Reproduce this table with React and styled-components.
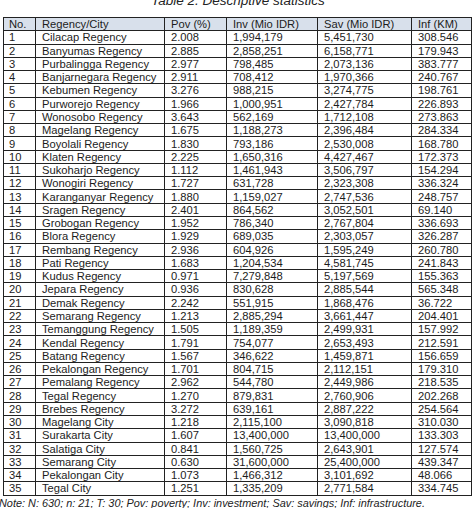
import React from "react";
import styled, { createGlobalStyle } from "styled-components";

const Global = createGlobalStyle`
  html, body { margin: 0; padding: 0; background: #ffffff; }
  body { font-family: "Liberation Sans", Arial, sans-serif; color: #1c1c1c; overflow: hidden; }
`;

const Page = styled.div`
  width: 474px;
  height: 508px;
  overflow: hidden;
  display: flex;
  flex-direction: column;
`;

const Title = styled.div`
  font-style: italic;
  font-size: 13.5px;
  line-height: 16px;
  height: 16px;
  margin-top: -7px;
  margin-bottom: 8px;
  text-align: center;
  padding-left: 2px;
  color: #222;
`;

const Table = styled.table`
  border-collapse: collapse;
  margin-left: 3px;
  width: 468px;
  table-layout: fixed;
  font-size: 11.2px;
`;

const Col = styled.col`
  width: ${(p) => p.$w}px;
`;

const Row = styled.tr`
  height: 13.28px;
  background: ${(p) => (p.$head ? "#d8e0eb" : "#ffffff")};
`;

const Cell = styled.td`
  border: 1px solid #222;
  padding: 0 0 0 ${(p) => p.$pad || 6}px;
  line-height: 12px;
  white-space: nowrap;
  overflow: hidden;
  vertical-align: middle;
`;

const Note = styled.div`
  font-style: italic;
  font-size: 10.9px;
  line-height: 12px;
  margin-top: 1px;
  margin-left: -1px;
  white-space: nowrap;
  color: #222;
`;

const data = [
  ["Cilacap Regency", "2.008", "1,994,179", "5,451,730", "308.546"],
  ["Banyumas Regency", "2.885", "2,858,251", "6,158,771", "179.943"],
  ["Purbalingga Regency", "2.977", "798,485", "2,073,136", "383.777"],
  ["Banjarnegara Regency", "2.911", "708,412", "1,970,366", "240.767"],
  ["Kebumen Regency", "3.276", "988,215", "3,274,775", "198.761"],
  ["Purworejo Regency", "1.966", "1,000,951", "2,427,784", "226.893"],
  ["Wonosobo Regency", "3.643", "562,169", "1,712,108", "273.863"],
  ["Magelang Regency", "1.675", "1,188,273", "2,396,484", "284.334"],
  ["Boyolali Regency", "1.830", "793,186", "2,530,008", "168.780"],
  ["Klaten Regency", "2.225", "1,650,316", "4,427,467", "172.373"],
  ["Sukoharjo Regency", "1.112", "1,461,943", "3,506,797", "154.294"],
  ["Wonogiri Regency", "1.727", "631,728", "2,323,308", "336.324"],
  ["Karanganyar Regency", "1.880", "1,159,027", "2,747,536", "248.757"],
  ["Sragen Regency", "2.401", "864,562", "3,052,501", "69.140"],
  ["Grobogan Regency", "1.952", "786,340", "2,767,804", "336.693"],
  ["Blora Regency", "1.929", "689,035", "2,303,057", "326.287"],
  ["Rembang Regency", "2.936", "604,926", "1,595,249", "260.780"],
  ["Pati Regency", "1.683", "1,204,534", "4,581,745", "241.843"],
  ["Kudus Regency", "0.971", "7,279,848", "5,197,569", "155.363"],
  ["Jepara Regency", "0.936", "830,628", "2,885,544", "565.348"],
  ["Demak Regency", "2.242", "551,915", "1,868,476", "36.722"],
  ["Semarang Regency", "1.213", "2,885,294", "3,661,447", "204.401"],
  ["Temanggung Regency", "1.505", "1,189,359", "2,499,931", "157.992"],
  ["Kendal Regency", "1.791", "754,077", "2,653,493", "212.591"],
  ["Batang Regency", "1.567", "346,622", "1,459,871", "156.659"],
  ["Pekalongan Regency", "1.701", "804,715", "2,112,151", "179.310"],
  ["Pemalang Regency", "2.962", "544,780", "2,449,986", "218.535"],
  ["Tegal Regency", "1.270", "879,831", "2,760,906", "202.268"],
  ["Brebes Regency", "3.272", "639,161", "2,887,222", "254.564"],
  ["Magelang City", "1.218", "2,115,100", "3,090,818", "310.030"],
  ["Surakarta City", "1.607", "13,400,000", "13,400,000", "133.303"],
  ["Salatiga City", "0.841", "1,560,725", "2,643,901", "127.574"],
  ["Semarang City", "0.630", "31,600,000", "25,400,000", "439.347"],
  ["Pekalongan City", "1.073", "1,466,312", "3,101,692", "48.066"],
  ["Tegal City", "1.251", "1,335,209", "2,771,584", "334.745"],
];

const headers = ["No.", "Regency/City", "Pov (%)", "Inv (Mio IDR)", "Sav (Mio IDR)", "Inf (KM)"];
const widths = [32, 129, 62, 91, 94, 60];

export default function App() {
  return (
    <Page>
      <Global />
      <Title>Table 2. Descriptive statistics</Title>
      <Table>
        <colgroup>
          {widths.map((w, i) => (
            <Col key={i} $w={w} />
          ))}
        </colgroup>
        <tbody>
          <Row $head>
            {headers.map((h, i) => (
              <Cell key={i} $pad={i === 0 ? 5 : 6}>
                {h}
              </Cell>
            ))}
          </Row>
          {data.map((r, i) => (
            <Row key={i}>
              <Cell $pad={5}>{i + 1}</Cell>
              {r.map((v, j) => (
                <Cell key={j}>{v}</Cell>
              ))}
            </Row>
          ))}
        </tbody>
      </Table>
      <Note>Note: N: 630; n: 21; T: 30; Pov: poverty; Inv: investment; Sav: savings; Inf: infrastructure.</Note>
    </Page>
  );
}
